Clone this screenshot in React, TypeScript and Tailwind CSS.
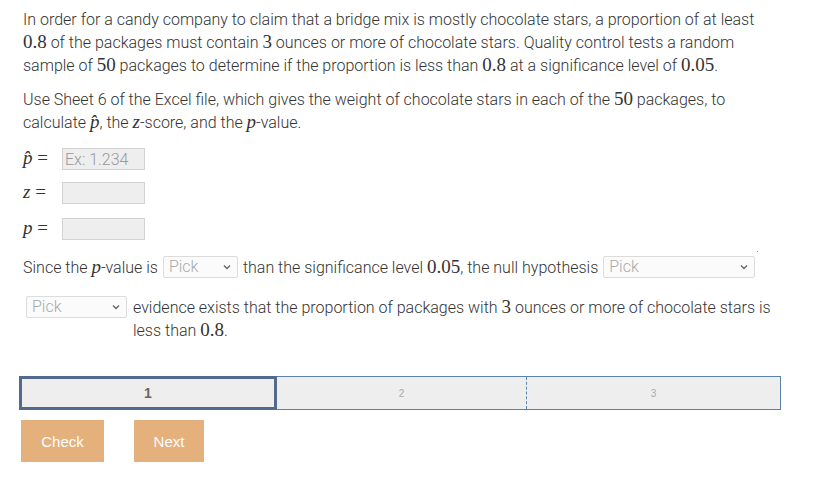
import React from 'react';

const M = ({ children, i = false }: { children: React.ReactNode; i?: boolean }) => (
  <span className={`font-['Liberation_Serif',serif] text-[19px] leading-none ${i ? 'italic' : ''}`}>{children}</span>
);

function Chevron() {
  return (
    <svg width="10" height="10" viewBox="0 0 10 10" className="shrink-0">
      <path d="M2 3.5 L5 6.5 L8 3.5" fill="none" stroke="#666" strokeWidth="1.4" />
    </svg>
  );
}

function Select({ width }: { width: string }) {
  return (
    <span
      className={`inline-flex items-center justify-between h-[22px] ${width} border border-[#dcdcdc] rounded-[2px] bg-[#fbfbfb] pl-[5px] pr-[5px] text-[#a9a9a9] align-middle`}
    >
      <span className="text-[16px] leading-none">Pick</span>
      <Chevron />
    </span>
  );
}

function Field({ label, placeholder }: { label: React.ReactNode; placeholder?: string }) {
  return (
    <div className="flex items-center h-[22px]">
      <div className="w-[39px] leading-[22px]">{label}</div>
      <div className="w-[83px] h-[22px] border border-[#d3d3d3] bg-[#eeeeee] px-[2px] flex items-center text-[16px] text-[#999]">
        {placeholder}
      </div>
    </div>
  );
}

export default function App() {
  return (
    <div className="bg-white w-[825px] h-[491px] px-[23px] pt-[8px] font-['Roboto',sans-serif] font-light text-[16px] leading-[23px] text-[#333]">
      <p className="w-[740px]">
        In order for a candy company to claim that a bridge mix is mostly chocolate stars, a proportion of at least{' '}
        <M>0.8</M> of the packages must contain <M>3</M> ounces or more of chocolate stars. Quality control tests a random
        sample of <M>50</M> packages to determine if the proportion is less than <M>0.8</M> at a significance level of{' '}
        <M>0.05</M>.
      </p>
      <p className="mt-[11px] w-[740px]">
        Use Sheet 6 of the Excel file, which gives the weight of chocolate stars in each of the <M>50</M> packages, to
        calculate <M i>p̂</M>, the <M i>z</M>-score, and the <M i>p</M>-value.
      </p>

      <div className="mt-[14px] flex flex-col gap-[12px]">
        <Field label={<M i><span>p̂</span> <span className="not-italic">=</span></M>} placeholder="Ex: 1.234" />
        <Field label={<M i>z <span className="not-italic">=</span></M>} />
        <div className="mt-[2px]">
          <Field label={<M i>p <span className="not-italic">=</span></M>} />
        </div>
      </div>

      <div className="mt-[16px] h-[22px] flex items-center gap-[5px] relative whitespace-nowrap">
        <span>
          Since the <M i>p</M>-value is
        </span>
        <Select width="w-[75px]" />
        <span>
          than the significance level <M>0.05</M>, the null hypothesis
        </span>
        <Select width="w-[152px]" />
        <span className="absolute left-[734px] -top-[5px] w-[1px] h-[1px] bg-[#999]" />
      </div>

      <div className="mt-[18px] flex items-start gap-[6px] pl-[3px]">
        <Select width="w-[101px] shrink-0" />
        <p className="w-[650px]">
          evidence exists that the proportion of packages with <M>3</M> ounces or more of chocolate stars is less than{' '}
          <M>0.8</M>.
        </p>
      </div>

      <div className="mt-[34px] -ml-[4px] w-[762px] h-[34px] flex font-['Liberation_Sans',sans-serif]">
        <div className="w-[258px] border-[3px] border-[#546a8a] bg-[#eeeeee] flex items-center justify-center text-[14px] font-bold text-[#666]">
          1
        </div>
        <div className="flex-1 flex border border-l-0 border-[#5b82ad] bg-[#eeeeee]">
          <div className="w-[250px] flex items-center justify-center text-[10px] text-[#aaa] border-r border-dashed border-[#5b82ad]">
            2
          </div>
          <div className="flex-1 flex items-center justify-center text-[10px] text-[#aaa]">3</div>
        </div>
      </div>

      <div className="mt-[10px] -ml-[2px] flex gap-[30px] font-['Liberation_Sans',sans-serif]">
        <button className="w-[83px] h-[42px] bg-[#e4b07b] text-white text-[15px]">Check</button>
        <button className="w-[70px] h-[42px] bg-[#e4b07b] text-white text-[15px]">Next</button>
      </div>
    </div>
  );
}
